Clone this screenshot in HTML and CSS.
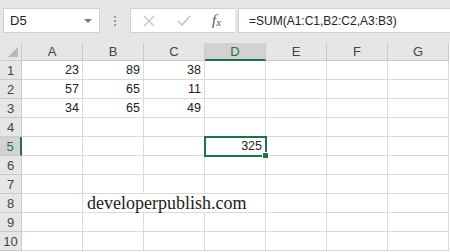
FILE: index.html
```html
<!DOCTYPE html>
<html lang="en">
<head>
    <meta charset="UTF-8">
    <title>Excel SUM</title>
    <link rel="stylesheet" href="styles.css">
</head>
<body>

<div class="toolbar">
    <div class="name-box">
        <span>D5</span>
        <span class="caret"></span>
    </div>
    <div class="grip"><i></i><i></i><i></i></div>
    <div class="fx-box">
        <svg class="tool" width="14" height="14" viewBox="0 0 14 14"><path d="M2 2 L12 12 M12 2 L2 12" stroke="#c4c4c4" stroke-width="1.4" fill="none"/></svg>
        <svg class="tool" width="16" height="14" viewBox="0 0 16 14"><path d="M2 7 L6 11 L14 2" stroke="#c4c4c4" stroke-width="1.6" fill="none"/></svg>
        <span class="fx">f<sub>x</sub></span>
    </div>
    <div class="formula">=SUM(A1:C1,B2:C2,A3:B3)</div>
</div>

<div class="sheet">
    <div class="corner"><span class="tri"></span></div>
    <div class="col-head">A</div>
    <div class="col-head">B</div>
    <div class="col-head">C</div>
    <div class="col-head active">D</div>
    <div class="col-head">E</div>
    <div class="col-head">F</div>
    <div class="col-head">G</div>

    <div class="row-head">1</div>
    <div class="cell num">23</div><div class="cell num">89</div><div class="cell num">38</div>
    <div class="cell"></div><div class="cell"></div><div class="cell"></div><div class="cell"></div>

    <div class="row-head">2</div>
    <div class="cell num">57</div><div class="cell num">65</div><div class="cell num">11</div>
    <div class="cell"></div><div class="cell"></div><div class="cell"></div><div class="cell"></div>

    <div class="row-head">3</div>
    <div class="cell num">34</div><div class="cell num">65</div><div class="cell num">49</div>
    <div class="cell"></div><div class="cell"></div><div class="cell"></div><div class="cell"></div>

    <div class="row-head">4</div>
    <div class="cell"></div><div class="cell"></div><div class="cell"></div>
    <div class="cell"></div><div class="cell"></div><div class="cell"></div><div class="cell"></div>

    <div class="row-head active">5</div>
    <div class="cell"></div><div class="cell"></div><div class="cell"></div>
    <div class="cell num selected">325<span class="handle"></span></div><div class="cell"></div><div class="cell"></div><div class="cell"></div>

    <div class="row-head">6</div>
    <div class="cell"></div><div class="cell"></div><div class="cell"></div>
    <div class="cell"></div><div class="cell"></div><div class="cell"></div><div class="cell"></div>

    <div class="row-head">7</div>
    <div class="cell"></div><div class="cell"></div><div class="cell"></div>
    <div class="cell"></div><div class="cell"></div><div class="cell"></div><div class="cell"></div>

    <div class="row-head">8</div>
    <div class="cell"></div><div class="cell text span3">developerpublish.com</div>
    <div class="cell"></div><div class="cell"></div><div class="cell"></div>

    <div class="row-head">9</div>
    <div class="cell"></div><div class="cell"></div><div class="cell"></div>
    <div class="cell"></div><div class="cell"></div><div class="cell"></div><div class="cell"></div>

    <div class="row-head">10</div>
    <div class="cell"></div><div class="cell"></div><div class="cell"></div>
    <div class="cell"></div><div class="cell"></div><div class="cell"></div><div class="cell"></div>
</div>

</body>
</html>
```

FILE: styles.css
```css
body {
    margin: 0;
    width: 450px;
    height: 252px;
    overflow: hidden;
    background-color: #fff;
    font-family: "Liberation Sans", Arial, sans-serif;
    color: #222;
}

.toolbar {
    height: 43px;
    background-color: #e6e6e6;
    display: flex;
    align-items: center;
    box-sizing: border-box;
    padding: 0 0 2px 3px;
}

.name-box {
    width: 97px;
    height: 25px;
    box-sizing: border-box;
    background: #fff;
    border: 1px solid #d0d0d0;
    display: flex;
    align-items: center;
    justify-content: space-between;
    padding: 0 7px 0 6px;
    font-size: 13px;
}

.caret {
    width: 0;
    height: 0;
    border-left: 4px solid transparent;
    border-right: 4px solid transparent;
    border-top: 4px solid #777;
}

.grip {
    width: 30px;
    display: flex;
    flex-direction: column;
    align-items: center;
    gap: 2px;
}

.grip i {
    width: 2px;
    height: 2px;
    background: #9a9a9a;
}

.fx-box {
    width: 105px;
    height: 25px;
    box-sizing: border-box;
    background: #fff;
    border: 1px solid #d0d0d0;
    border-right: none;
    display: flex;
    align-items: center;
    padding-left: 11px;
    gap: 20px;
}

.fx {
    font-family: "Liberation Serif", serif;
    font-style: italic;
    font-size: 15px;
    color: #555;
}

.fx sub {
    font-size: 11px;
    vertical-align: -1px;
}

.formula {
    flex: 1;
    height: 25px;
    box-sizing: border-box;
    margin-left: 3px;
    background: #fff;
    border: 1px solid #d0d0d0;
    border-right: none;
    display: flex;
    align-items: center;
    padding-left: 10px;
    font-size: 12px;
}

.sheet {
    display: grid;
    grid-template-columns: 22px repeat(7, 61px);
    grid-template-rows: 18px;
    grid-auto-rows: 19px;
}

.sheet > div {
    box-sizing: border-box;
    border-right: 1px solid #dadada;
    border-bottom: 1px solid #dadada;
}

.corner {
    background: #e6e6e6;
    position: relative;
}

.tri {
    position: absolute;
    right: 3px;
    bottom: 3px;
    width: 0;
    height: 0;
    border-left: 10px solid transparent;
    border-bottom: 10px solid #b8b8b8;
}

.col-head,
.row-head {
    background: #e6e6e6;
    color: #444;
    font-size: 13px;
    display: flex;
    align-items: center;
    justify-content: center;
}

.sheet > .col-head,
.sheet > .corner,
.sheet > .row-head {
    border-right-color: #cacaca;
    border-bottom-color: #cacaca;
}

.sheet > .col-head.active {
    background: #d2d2d2;
    color: #217346;
    border-bottom: 2px solid #217346;
}

.sheet > .row-head.active {
    background: #d2d2d2;
    color: #217346;
    border-right: 2px solid #217346;
}

.cell {
    font-size: 12.5px;
    line-height: 19px;
    padding: 0 3px;
    white-space: nowrap;
}

.num {
    text-align: right;
}

.text {
    font-family: "Liberation Serif", serif;
    font-size: 18px;
    line-height: 18px;
    padding-left: 4px;
}

.span3 {
    grid-column: span 3;
}

.sheet > .selected {
    position: relative;
    outline: 2px solid #217346;
    outline-offset: -1px;
    z-index: 1;
}

.handle {
    position: absolute;
    right: -4px;
    bottom: -4px;
    width: 5px;
    height: 5px;
    background: #217346;
    border: 1px solid #fff;
}
```
